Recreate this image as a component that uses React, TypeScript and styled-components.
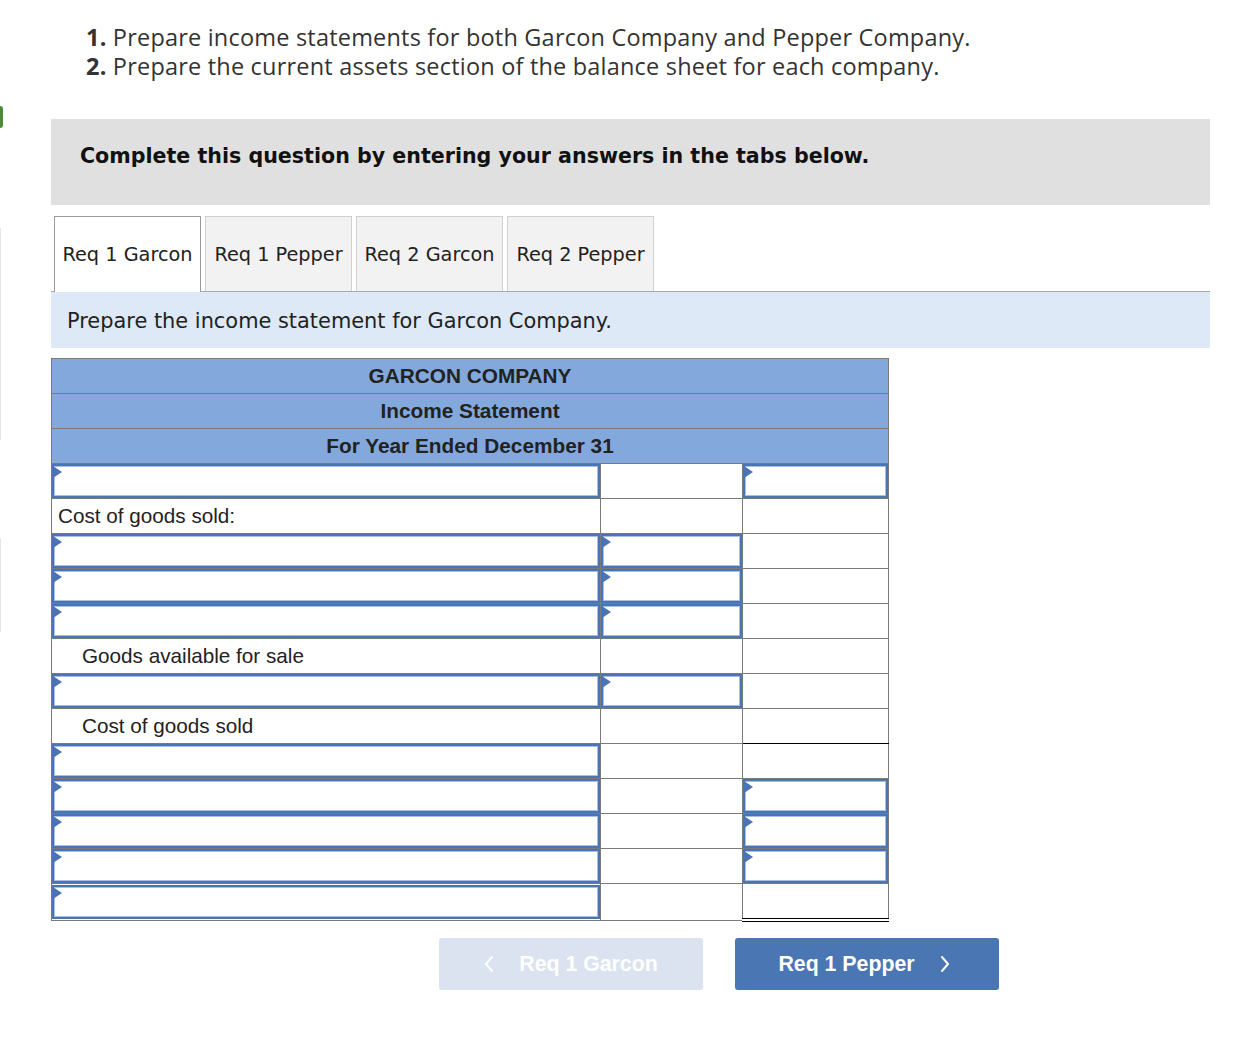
import React from "react";
import styled, { createGlobalStyle } from "styled-components";

const GlobalStyle = createGlobalStyle`
  body {
    margin: 0;
    background: #ffffff;
    color: #222222;
    font-family: "Liberation Sans", Arial, sans-serif;
  }
`;

const Page = styled.div`
  display: flex;
  width: 1260px;
  min-height: 1040px;
`;

const Edge = styled.div`
  width: 4px;
  display: flex;
  flex-direction: column;
`;

const EdgeMark = styled.div<{ $top: number; $height: number; $color: string }>`
  margin-top: ${(p) => p.$top}px;
  height: ${(p) => p.$height}px;
  width: ${(p) => (p.$color === "green" ? 3 : 1)}px;
  background: ${(p) => (p.$color === "green" ? "#4f8a3a" : "#e6e6e6")};
  border-radius: ${(p) => (p.$color === "green" ? "0 3px 3px 0" : "0")};
`;

const Main = styled.div`
  margin-left: 47px;
  width: 1159px;
`;

const Instructions = styled.ol`
  list-style: none;
  margin: 0;
  padding: 23px 0 0 35px;
  font-family: "Open Sans", "Noto Sans", sans-serif;
  font-size: 23.5px;
  letter-spacing: 0.2px;
  line-height: 29px;
  color: #333333;
`;

const Step = styled.li`
  b {
    font-weight: 700;
  }
`;

const Banner = styled.div`
  margin-top: 38px;
  height: 86px;
  box-sizing: border-box;
  background: #e0e0e0;
  padding: 24px 0 0 29px;
  font-family: "DejaVu Sans", Verdana, sans-serif;
  font-weight: 700;
  font-size: 20.6px;
  line-height: 26px;
  color: #111111;
`;

const TabRow = styled.div`
  margin-top: 11px;
  padding-left: 3px;
  display: flex;
  gap: 4px;
  border-bottom: 1px solid #a9a9a9;
`;

const Tab = styled.div<{ $active?: boolean }>`
  width: 147px;
  box-sizing: border-box;
  display: flex;
  align-items: center;
  justify-content: center;
  font-family: "DejaVu Sans", Verdana, sans-serif;
  font-size: 19.3px;
  color: #222222;
  background: ${(p) => (p.$active ? "#ffffff" : "#f2f2f2")};
  border: 1px solid ${(p) => (p.$active ? "#9a9a9a" : "#d0d0d0")};
  border-bottom: none;
  margin-bottom: ${(p) => (p.$active ? "-1px" : "0")};
  height: ${(p) => (p.$active ? "76px" : "75px")};
`;

const Prompt = styled.div`
  height: 56px;
  box-sizing: border-box;
  background: #dde9f7;
  padding: 1px 0 0 16px;
  display: flex;
  align-items: center;
  font-family: "DejaVu Sans", Verdana, sans-serif;
  font-size: 20.9px;
  color: #222222;
`;

const Sheet = styled.table`
  margin-top: 10px;
  width: 837px;
  border-collapse: collapse;
  table-layout: fixed;
  border: 1px solid #7a7a7a;
`;

const HeadCell = styled.th`
  height: 34px;
  padding: 0;
  background: #83a9dc;
  border-bottom: 1px solid #7a7a7a;
  font-size: 20.8px;
  font-weight: 700;
  color: #222222;
  text-align: center;
`;

const Cell = styled.td<{ $under?: "single" | "double" }>`
  height: 34px;
  padding: 0;
  border: 1px solid #7a7a7a;
  vertical-align: middle;
  ${(p) => p.$under === "single" && "border-bottom: 1px solid #000;"}
  ${(p) => p.$under === "double" && "border-bottom: 4px double #000;"}
`;

const Label = styled.div<{ $indent?: boolean }>`
  padding-left: ${(p) => (p.$indent ? "30px" : "6px")};
  font-size: 20.7px;
  color: #222222;
`;

const Entry = styled.div`
  position: relative;
  height: 34px;
  box-sizing: border-box;
  border: 2px solid #4b74b5;
  box-shadow: inset 0 0 0 1px #a7bfe5;
  background: #ffffff;

  &::before {
    content: "";
    position: absolute;
    left: -1px;
    top: 0;
    border-top: 6px solid transparent;
    border-bottom: 6px solid transparent;
    border-left: 9px solid #4b74b5;
  }
`;

const Nav = styled.div`
  margin-top: 16px;
  padding-left: 388px;
  display: flex;
  gap: 32px;
`;

const NavButton = styled.button<{ $disabled?: boolean }>`
  width: 264px;
  height: 52px;
  border: none;
  border-radius: 3px;
  background: ${(p) => (p.$disabled ? "#dae3ef" : "#4a76b4")};
  color: #ffffff;
  font-family: "Liberation Sans", Arial, sans-serif;
  font-weight: 700;
  font-size: 21.3px;
  display: flex;
  align-items: center;
  justify-content: center;
  gap: 25px;
  padding: 0 ${(p) => (p.$disabled ? "0" : "6px")} 0 0;
  cursor: ${(p) => (p.$disabled ? "default" : "pointer")};
`;

const Chevron = ({ dir }: { dir: "left" | "right" }) => (
  <svg width="10" height="18" viewBox="0 0 10 18" fill="none">
    <path
      d={dir === "left" ? "M8 2 L2 9 L8 16" : "M2 2 L8 9 L2 16"}
      stroke="#ffffff"
      strokeWidth="2"
      strokeLinecap="round"
      strokeLinejoin="round"
    />
  </svg>
);

type Col = "entry" | "blank" | "single" | "double";
type Line = { label?: string; indent?: boolean; c1: "entry" | "text"; c2: Col; c3: Col };

const lines: Line[] = [
  { c1: "entry", c2: "blank", c3: "entry" },
  { c1: "text", label: "Cost of goods sold:", c2: "blank", c3: "blank" },
  { c1: "entry", c2: "entry", c3: "blank" },
  { c1: "entry", c2: "entry", c3: "blank" },
  { c1: "entry", c2: "entry", c3: "blank" },
  { c1: "text", label: "Goods available for sale", indent: true, c2: "blank", c3: "blank" },
  { c1: "entry", c2: "entry", c3: "blank" },
  { c1: "text", label: "Cost of goods sold", indent: true, c2: "blank", c3: "single" },
  { c1: "entry", c2: "blank", c3: "blank" },
  { c1: "entry", c2: "blank", c3: "entry" },
  { c1: "entry", c2: "blank", c3: "entry" },
  { c1: "entry", c2: "blank", c3: "entry" },
  { c1: "entry", c2: "blank", c3: "double" },
];

const ValueCell = ({ kind }: { kind: Col }) => {
  if (kind === "entry")
    return (
      <Cell>
        <Entry />
      </Cell>
    );
  if (kind === "single") return <Cell $under="single" />;
  if (kind === "double") return <Cell $under="double" />;
  return <Cell />;
};

export default function App() {
  return (
    <>
      <GlobalStyle />
      <Page>
        <Edge>
          <EdgeMark $top={106} $height={22} $color="green" />
          <EdgeMark $top={100} $height={212} $color="grey" />
          <EdgeMark $top={98} $height={94} $color="grey" />
        </Edge>
        <Main>
          <Instructions>
            <Step>
              <b>1.</b> Prepare income statements for both Garcon Company and Pepper Company.
            </Step>
            <Step>
              <b>2.</b> Prepare the current assets section of the balance sheet for each company.
            </Step>
          </Instructions>

          <Banner>Complete this question by entering your answers in the tabs below.</Banner>

          <TabRow>
            <Tab $active>Req 1 Garcon</Tab>
            <Tab>Req 1 Pepper</Tab>
            <Tab>Req 2 Garcon</Tab>
            <Tab>Req 2 Pepper</Tab>
          </TabRow>

          <Prompt>Prepare the income statement for Garcon Company.</Prompt>

          <Sheet>
            <colgroup>
              <col style={{ width: 549 }} />
              <col style={{ width: 142 }} />
              <col style={{ width: 146 }} />
            </colgroup>
            <thead>
              <tr>
                <HeadCell colSpan={3}>GARCON COMPANY</HeadCell>
              </tr>
              <tr>
                <HeadCell colSpan={3}>Income Statement</HeadCell>
              </tr>
              <tr>
                <HeadCell colSpan={3}>For Year Ended December 31</HeadCell>
              </tr>
            </thead>
            <tbody>
              {lines.map((line, i) => (
                <tr key={i}>
                  {line.c1 === "entry" ? (
                    <Cell>
                      <Entry />
                    </Cell>
                  ) : (
                    <Cell>
                      <Label $indent={line.indent}>{line.label}</Label>
                    </Cell>
                  )}
                  <ValueCell kind={line.c2} />
                  <ValueCell kind={line.c3} />
                </tr>
              ))}
            </tbody>
          </Sheet>

          <Nav>
            <NavButton $disabled>
              <Chevron dir="left" />
              Req 1 Garcon
            </NavButton>
            <NavButton>
              Req 1 Pepper
              <Chevron dir="right" />
            </NavButton>
          </Nav>
        </Main>
      </Page>
    </>
  );
}
